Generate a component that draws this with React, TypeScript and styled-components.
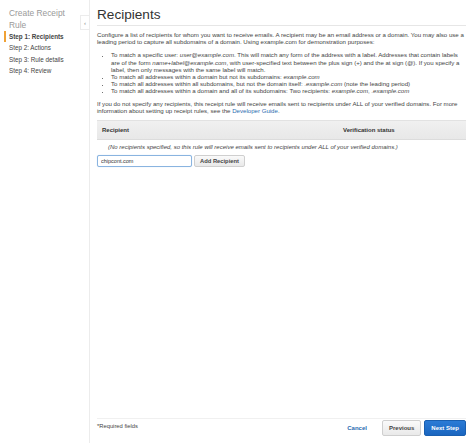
import React from "react";
import styled, { createGlobalStyle } from "styled-components";

const GlobalStyle = createGlobalStyle`
  html, body {
    margin: 0;
    padding: 0;
    background: #fff;
  }
  body {
    font-family: "Liberation Sans", Arial, sans-serif;
    color: #333;
  }
`;

const Page = styled.div`
  display: flex;
  width: 474px;
  height: 443px;
  overflow: hidden;
`;

const Sidebar = styled.div`
  width: 80px;
  flex-shrink: 0;
  padding: 7px 0 0 0;
  box-sizing: border-box;
`;

const SidebarTitle = styled.div`
  font-size: 8.4px;
  line-height: 12px;
  color: #999;
  padding-left: 9px;
`;

const StepList = styled.ul`
  list-style: none;
  margin: 0;
  padding: 0;
`;

const StepItem = styled.li<{ $active?: boolean }>`
  font-size: 6.3px;
  line-height: 11.3px;
  color: #444;
  font-weight: ${({ $active }) => ($active ? "bold" : "normal")};
  border-left: 2px solid ${({ $active }) => ($active ? "#f0a134" : "transparent")};
  margin-left: 4px;
  padding-left: 3px;
`;

const Divider = styled.div`
  position: relative;
  width: 9px;
  flex-shrink: 0;
  border-right: 1px solid #ececec;
`;

const CollapseTab = styled.div`
  position: absolute;
  top: 15px;
  left: 0;
  width: 9px;
  height: 15px;
  box-sizing: border-box;
  border: 1px solid #ececec;
  border-right: none;
  background: #fff;
  display: flex;
  align-items: center;
  justify-content: center;
  font-size: 6px;
  color: #888;
`;

const Main = styled.div`
  flex: 1;
  display: flex;
  flex-direction: column;
  padding: 7px 8px 7px 7px;
  box-sizing: border-box;
`;

const Title = styled.h1`
  font-size: 13.6px;
  font-weight: normal;
  color: #333;
  margin: 0;
  padding-bottom: 3px;
  border-bottom: 1px solid #e6e6e6;
  line-height: 15px;
`;

const Text = styled.p`
  font-size: 6.1px;
  line-height: 7.2px;
  margin: 5px 0 0;
  color: #444;
`;

const Bullets = styled.ul`
  margin: 6px 0 0;
  padding-left: 14px;
  font-size: 6.1px;
  line-height: 7.2px;
  color: #444;
  list-style: disc;

  li::marker {
    font-size: 4px;
  }
`;

const Sample = styled.em`
  font-style: italic;
`;

const Link = styled.a`
  color: #2b6cb0;
  text-decoration: none;
`;

const Table = styled.div`
  margin-top: 6px;
`;

const TableHead = styled.div`
  display: flex;
  height: 18px;
  align-items: center;
  background: linear-gradient(#f0f0f0, #e8e8e8);
  border-top: 1px solid #e2e2e2;
  border-bottom: 1px solid #dcdcdc;
  font-size: 6px;
  font-weight: bold;
  color: #333;
`;

const HeadCell = styled.div<{ $width?: string }>`
  width: ${({ $width }) => $width || "auto"};
  padding-left: 5px;
`;

const EmptyNote = styled.div`
  font-size: 6px;
  font-style: italic;
  color: #444;
  padding: 4px 0 0 11px;
  line-height: 7.2px;
`;

const AddRow = styled.div`
  display: flex;
  align-items: center;
  gap: 2px;
  margin-top: 4px;
`;

const Input = styled.input`
  width: 95px;
  height: 12px;
  box-sizing: border-box;
  border: 1px solid #8ab4e0;
  border-radius: 2px;
  box-shadow: 0 0 1px #b5d2f0;
  font-family: inherit;
  font-size: 5.5px;
  padding: 0 3px;
  color: #333;
  outline: none;
`;

const Button = styled.button<{ $variant?: "primary" | "default" | "link" }>`
  font-family: inherit;
  font-weight: bold;
  font-size: 6px;
  border-radius: 2px;
  cursor: pointer;
  padding: 0 6px;
  box-sizing: border-box;
  height: ${({ $variant }) => ($variant === "primary" || $variant === "default" ? "16px" : "auto")};
  color: ${({ $variant }) =>
    $variant === "primary" ? "#fff" : $variant === "link" ? "#2b6cb0" : "#444"};
  background: ${({ $variant }) =>
    $variant === "primary"
      ? "linear-gradient(#2b7bd6, #1a66c0)"
      : $variant === "link"
      ? "transparent"
      : "linear-gradient(#fafafa, #e9e9e9)"};
  border: ${({ $variant }) =>
    $variant === "primary"
      ? "1px solid #1a5fb0"
      : $variant === "link"
      ? "none"
      : "1px solid #cfcfcf"};
`;

const SmallButton = styled(Button)`
  height: 12px;
  padding: 0 5px;
  font-size: 5.8px;
`;

const Spacer = styled.div`
  flex: 1;
`;

const Footer = styled.div`
  display: flex;
  align-items: center;
  border-top: 1px solid #f0f0f0;
  padding-top: 1px;
  gap: 3px;
`;

const Required = styled.div`
  font-size: 5.8px;
  color: #444;
  flex: 1;
  align-self: flex-start;
  padding-top: 3px;
`;

const CancelButton = styled(Button)`
  margin-right: 6px;
`;

export default function App() {
  return (
    <Page>
      <GlobalStyle />
      <Sidebar>
        <SidebarTitle>
          Create Receipt
          <br />
          Rule
        </SidebarTitle>
        <StepList>
          <StepItem $active>Step 1: Recipients</StepItem>
          <StepItem>Step 2: Actions</StepItem>
          <StepItem>Step 3: Rule details</StepItem>
          <StepItem>Step 4: Review</StepItem>
        </StepList>
      </Sidebar>
      <Divider>
        <CollapseTab>‹</CollapseTab>
      </Divider>
      <Main>
        <Title>Recipients</Title>
        <Text>
          Configure a list of recipients for whom you want to receive emails. A recipient may be an email address or a
          domain. You may also use a leading period to capture all subdomains of a domain. Using example.com for
          demonstration purposes:
        </Text>
        <Bullets>
          <li>
            To match a specific user: <Sample>user@example.com</Sample>. This will match any form of the address with
            a label. Addresses that contain labels
            <br />
            are of the form <Sample>name+label@example.com</Sample>, with user-specified text between the plus sign (+)
            and the at sign (@). If you specify a
            <br />
            label, then only messages with the same label will match.
          </li>
          <li>
            To match all addresses within a domain but not its subdomains: <Sample>example.com</Sample>
          </li>
          <li>
            To match all addresses within all subdomains, but not the domain itself: <Sample>.example.com</Sample> (note
            the leading period)
          </li>
          <li>
            To match all addresses within a domain and all of its subdomains: Two recipients:{" "}
            <Sample>example.com</Sample>, <Sample>.example.com</Sample>
          </li>
        </Bullets>
        <Text>
          If you do not specify any recipients, this receipt rule will receive emails sent to recipients under ALL of
          your verified domains. For more
          <br />
          information about setting up receipt rules, see the <Link href="#">Developer Guide</Link>.
        </Text>
        <Table>
          <TableHead>
            <HeadCell $width="236px">Recipient</HeadCell>
            <HeadCell>Verification status</HeadCell>
          </TableHead>
          <EmptyNote>
            (No recipients specified, so this rule will receive emails sent to recipients under ALL of your verified
            domains.)
          </EmptyNote>
        </Table>
        <AddRow>
          <Input defaultValue="chipcont.com" />
          <SmallButton $variant="default">Add Recipient</SmallButton>
        </AddRow>
        <Spacer />
        <Footer>
          <Required>*Required fields</Required>
          <CancelButton $variant="link">Cancel</CancelButton>
          <Button $variant="default">Previous</Button>
          <Button $variant="primary">Next Step</Button>
        </Footer>
      </Main>
    </Page>
  );
}
